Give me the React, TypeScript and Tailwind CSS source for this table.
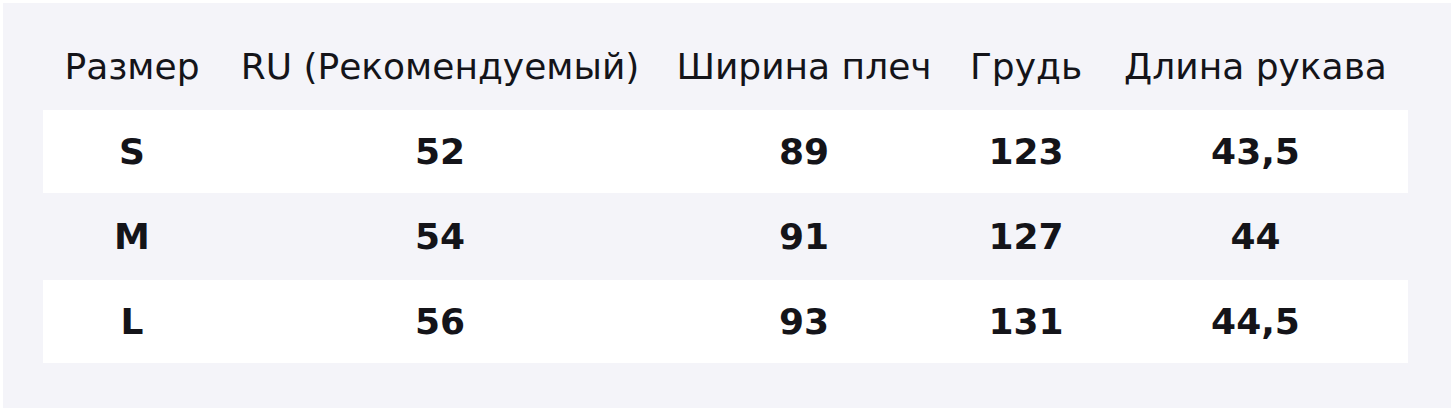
const header = ["Размер", "RU (Рекомендуемый)", "Ширина плеч", "Грудь", "Длина рукава"];

const rows = [
  { cells: ["S", "52", "89", "123", "43,5"], bg: "bg-white", h: "h-[83px]" },
  { cells: ["M", "54", "91", "127", "44"], bg: "bg-transparent", h: "h-[87px]" },
  { cells: ["L", "56", "93", "131", "44,5"], bg: "bg-white", h: "h-[83px]" },
];

const cols = "grid grid-cols-[178px_438px_290px_154px_305px]";

export default function App() {
  return (
    <div className="bg-white pl-[3px] pt-[3px] w-[1451px] h-[408px] overflow-hidden">
      <div
        className="bg-[#f4f4f9] w-full h-full pl-[40px] pt-[20px] text-[#141419]"
        style={{ fontFamily: '"DejaVu Sans", sans-serif' }}
      >
        <div className={`${cols} h-[87px] items-center text-[36px] leading-none`}>
          {header.map((h) => (
            <div key={h} className="text-center whitespace-nowrap">
              {h}
            </div>
          ))}
        </div>
        {rows.map((r, i) => (
          <div key={i} className={`${cols} ${r.h} ${r.bg} items-center w-[1365px] text-[36px] font-bold leading-none`}>
            {r.cells.map((c, j) => (
              <div key={j} className="text-center">
                {c}
              </div>
            ))}
          </div>
        ))}
      </div>
    </div>
  );
}
